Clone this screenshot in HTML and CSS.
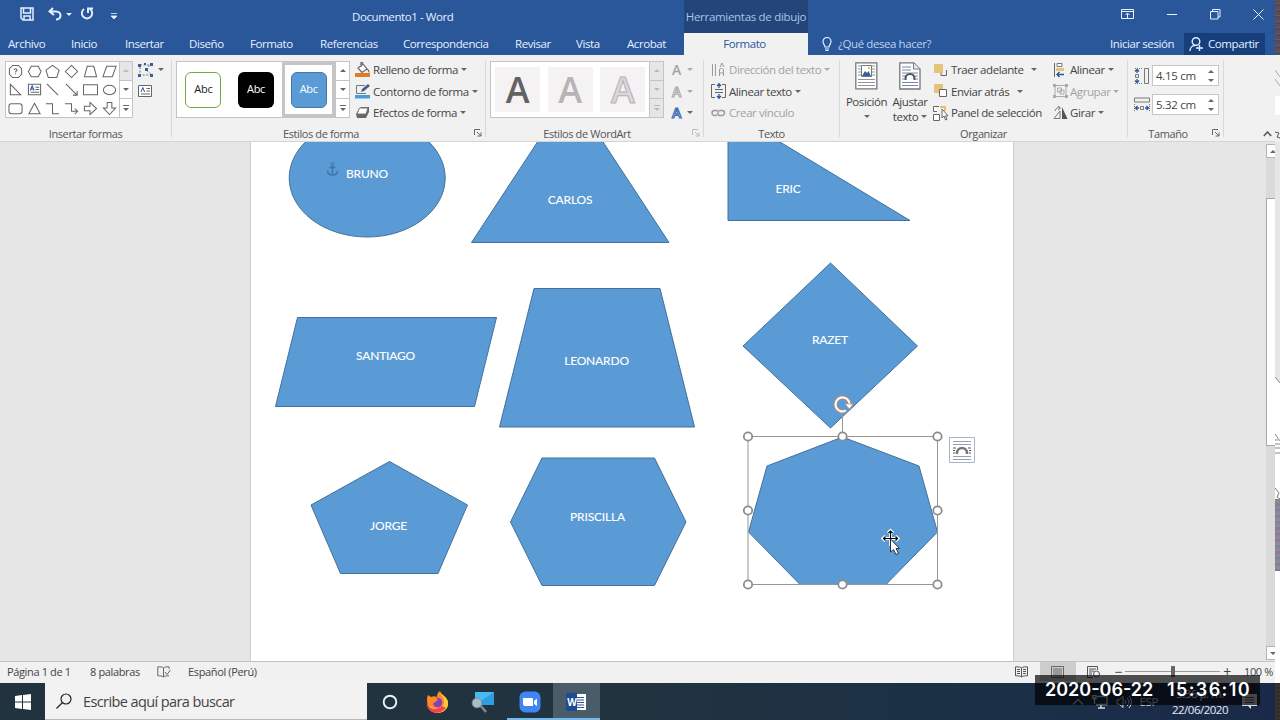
FILE: index.html
```html
<!DOCTYPE html>
<html lang="es">
<head>
    <meta charset="UTF-8">
    <meta name="viewport" content="width=device-width, initial-scale=1.0">
    <title>Documento1 - Word</title>
    <link rel="stylesheet" href="styles.css">
</head>
<body>
<div class="screen">
    <div class="window">
        <header class="titlebar">
            <div class="quick">
                <svg width="14" height="14" viewBox="0 0 14 14"><path d="M1 1h12v12H3l-2-2zM3.500 1v5h7V1M4 13V9h6v4" fill="none" stroke="#e4f1ff" stroke-width="1.500"/></svg>
                <svg width="14" height="14" viewBox="0 0 14 14"><path d="M5 1L1.500 4.500 6 8M2 4.500h6c6 0 6 8 0 8" fill="none" stroke="#e4f1ff" stroke-width="2"/></svg>
                <i class="caret light"></i>
                <svg class="redo" width="14" height="14" viewBox="0 0 14 14"><path d="M4 2a5.200 5.200 0 1 0 6 0M8 6V1.500h5" fill="none" stroke="#e4f1ff" stroke-width="1.900"/></svg>
                <svg class="more" width="7" height="7" viewBox="0 0 7 7"><path d="M0 .5h6M0 3h6L3 6z" fill="#e4f1ff" stroke="#e4f1ff" stroke-width=".8"/></svg>
            </div>
            <div class="doc-title">Documento1 - Word</div>
            <div class="tool-title">Herramientas de dibujo</div>
            <div class="win-buttons">
                <svg width="14" height="11" viewBox="0 0 14 11"><path d="M.5.5h12v9H.5zM.5 2.500h12M6.500 9V4.500M4.500 6l2-2 2 2" fill="none" stroke="#e4f1ff"/></svg>
                <svg width="11" height="11" viewBox="0 0 11 11"><path d="M0 5.500h10" stroke="#e4f1ff"/></svg>
                <svg width="11" height="11" viewBox="0 0 11 11"><path d="M.5 2.500h7.500V10H.5zM2.500 2.500v-2H10V8H8" fill="none" stroke="#e4f1ff"/></svg>
                <svg width="11" height="11" viewBox="0 0 11 11"><path d="M.5.5l10 10M10.500.5l-10 10" stroke="#e4f1ff"/></svg>
            </div>
        </header>

        <nav class="tabs">
            <span>Archivo</span><span>Inicio</span><span>Insertar</span><span>Diseño</span><span>Formato</span><span>Referencias</span><span class="wide">Correspondencia</span><span>Revisar</span><span>Vista</span><span>Acrobat</span>
            <span class="active">Formato</span>
            <span class="tell"><svg width="10" height="14" viewBox="0 0 10 14"><path d="M3 10C3 8 1 7 1 4.500a4 4 0 0 1 8 0C9 7 7 8 7 10zM3 12h4M3.500 13.500h3" fill="none" stroke="#e4f1ff" stroke-width="1.200"/></svg>¿Qué desea hacer?</span>
            <span class="login">Iniciar sesión</span>
            <span class="share"><svg width="14" height="14" viewBox="0 0 14 14"><circle cx="7" cy="4.500" r="3.800"/><path d="M1 14c0-3 2-5.500 5-5.500M7 11h7M10.500 8v6"/></svg>Compartir</span>
        </nav>

        <section class="ribbon">
            <div class="group g-insert">
                <div class="body">
                    <div class="gallery shapes">
                        <div class="shape-grid">
                            <svg viewBox="0 0 16 16"><path d="M5 1.500h6L14.500 5v6L11 14.500H5L1.500 11V5z"/><path d="M6.500 6.500c0-2 3-2 3 0 0 1-1.500 1-1.500 2.500M8 10v1"/></svg>
                            <svg viewBox="0 0 16 16"><path d="M4.500 2.500h7.500l3 5.500-3 5.500H4.500L1.500 8z"/></svg>
                            <svg viewBox="0 0 16 16"><path d="M8 1.500l7 5-2.500 8h-9L1 6.500z"/></svg>
                            <svg viewBox="0 0 16 16"><path d="M8 1.500L14.500 8 8 14.500 1.500 8z"/></svg>
                            <svg viewBox="0 0 16 16"><path d="M4.500 2.500h7l3 11h-13z"/></svg>
                            <svg viewBox="0 0 16 16"><path d="M5 2.500h10l-4 11H1z"/></svg>
                            <svg viewBox="0 0 16 16"><path d="M2.500 2.500v11h11z"/></svg>
                            <svg viewBox="0 0 16 16"><path d="M1.500 2.500h13v11h-13zM9 5.500h4M9 8h4M4 11h9"/><path d="M3.500 9l2-5 2 5M4.500 7.500h2.500" stroke="#2b579a"/></svg>
                            <svg viewBox="0 0 16 16"><path d="M2 2l12 12"/></svg>
                            <svg viewBox="0 0 16 16"><path d="M2 2l12 12M14 9.500V14H9.500"/></svg>
                            <svg viewBox="0 0 16 16"><path d="M.5 3h15v10.500H.5z"/></svg>
                            <svg viewBox="0 0 16 16"><ellipse cx="8" cy="8.500" rx="6.500" ry="5"/></svg>
                            <svg viewBox="0 0 16 16"><rect x="1" y="3" width="14" height="10.500" rx="2.500"/></svg>
                            <svg viewBox="0 0 16 16"><path d="M8 2.500l6 11H2z"/></svg>
                            <svg viewBox="0 0 16 16"><path d="M1 3h7v10.500h7"/></svg>
                            <svg viewBox="0 0 16 16"><path d="M1 3h7v8h6.500M11.500 8l3 3-3 3"/></svg>
                            <svg viewBox="0 0 16 16"><path d="M1.500 5.500h6v-4L14.500 8l-7 6.500v-4h-6z"/></svg>
                            <svg viewBox="0 0 16 16"><path d="M5.500 1.500h5v6h4L8 14.500l-6.500-7h4z"/></svg>
                        </div>
                        <div class="scroll"><b class="off"><i class="caret up"></i></b><b><i class="caret"></i></b><b class="last"><i class="caret"></i></b></div>
                    </div>
                    <div class="edit-tools">
                        <div class="row"><svg width="16" height="14" viewBox="0 0 16 14"><path d="M2 2h10L8 7l6 5H2z" fill="none" stroke="#777" stroke-dasharray="2 1.500"/><path d="M0 1h3v3H0zM12 0h3v3h-3zM7 5h3v3H7zM0 11h3v3H0zM12 11h3v3h-3zM6 0h2v2H6z" fill="#3a5f99"/></svg><i class="caret"></i></div>
                        <div class="row"><svg width="15" height="13" viewBox="0 0 15 13"><path d="M.5.5h13v11H.5zM8.500 3.500H12M8.500 6H12M3 9h9" fill="#fff" stroke="#666"/><path d="M3 7l1.800-4.500L6.600 7" fill="none" stroke="#2b579a"/></svg></div>
                    </div>
                </div>
                <div class="caption">Insertar formas</div>
            </div>

            <div class="group g-styles">
                <div class="body">
                    <div class="gallery">
                        <div class="swatch"><span class="abc outline">Abc</span></div>
                        <div class="swatch"><span class="abc black">Abc</span></div>
                        <div class="swatch selected"><span class="abc blue">Abc</span></div>
                        <div class="scroll"><b><i class="caret up"></i></b><b><i class="caret"></i></b><b class="last"><i class="caret"></i></b></div>
                    </div>
                    <div class="commands">
                        <div class="row"><svg width="16" height="16" viewBox="0 0 16 16"><path d="M3 6l5-4 4 5-5 3.500zM6 5V.500h1.500V3M12 7c2 1 2 2 2 3.500" fill="#fff" stroke="#666" stroke-width="1.200"/><path d="M0 11h15v4H0z" fill="#e07b28"/></svg>Relleno de forma<i class="caret"></i></div>
                        <div class="row"><svg width="16" height="16" viewBox="0 0 16 16"><path d="M10 2.500H1.500v8H11" fill="none" stroke="#777"/><path d="M6 9l1-3 6-5 2 2-6 5z" fill="#44618f"/><path d="M0 12h15v3.500H0z" fill="#4b9cd6"/></svg>Contorno de forma<i class="caret"></i></div>
                        <div class="row"><svg width="16" height="16" viewBox="0 0 16 16"><path d="M4 4l2-2h8v5l-3 6H2L1 9z" fill="#666"/><path d="M4.500 3h8.500L11 9H2z" fill="#fff" stroke="#777"/></svg>Efectos de forma<i class="caret"></i></div>
                    </div>
                </div>
                <div class="caption">Estilos de forma<svg class="launch" viewBox="0 0 8 8"><path d="M.5 6V.5H6M3 3l4 4M7 3.500V7H3.500"/></svg></div>
            </div>

            <div class="group g-wordart">
                <div class="body">
                    <div class="gallery">
                        <div class="swatch"><span class="art a1">A</span></div>
                        <div class="swatch"><span class="art a2">A</span></div>
                        <div class="swatch"><span class="art a3">A</span></div>
                        <div class="scroll dim"><b><i class="caret up"></i></b><b><i class="caret"></i></b><b class="last"><i class="caret"></i></b></div>
                    </div>
                    <div class="commands">
                        <div class="row off"><span class="mini">A</span><i class="caret"></i></div>
                        <div class="row off"><span class="mini hollow">A</span><i class="caret"></i></div>
                        <div class="row"><span class="mini glow">A</span><i class="caret"></i></div>
                    </div>
                </div>
                <div class="caption">Estilos de WordArt<svg class="launch faint" viewBox="0 0 8 8"><path d="M.5 6V.5H6M3 3l4 4M7 3.500V7H3.500"/></svg></div>
            </div>

            <div class="group g-text">
                <div class="body commands">
                    <div class="row off"><svg width="16" height="16" viewBox="0 0 16 16"><path d="M1.500 2v12M4.500 2v12M8.500 7v7M8.500 8c0-2 4-2 4 0v6M8.500 11h4M9 5l2-4 2 4" fill="none" stroke="#999"/></svg>Dirección del texto<i class="caret"></i></div>
                    <div class="row"><svg width="16" height="16" viewBox="0 0 16 16"><path d="M4 1.500H.5v13H4M11 1.500h3.500v13H11M4 6.500h8M4 9.500h8" fill="none" stroke="#666"/><path d="M8 0v5M8 16v-5M6 3l2-2 2 2M6 13l2 2 2-2" fill="none" stroke="#2b579a" stroke-width="1.300"/></svg>Alinear texto<i class="caret"></i></div>
                    <div class="row off"><svg width="16" height="16" viewBox="0 0 16 16"><path d="M6 10.500H3.500a2.500 2.500 0 0 1 0-5H6l2 2M8 5.500h3a2.500 2.500 0 0 1 0 5H8L6 8" fill="none" stroke="#999" stroke-width="1.500"/></svg>Crear vínculo</div>
                </div>
                <div class="caption">Texto</div>
            </div>

            <div class="group g-arrange">
                <div class="body">
                    <div class="big"><svg width="23" height="28" viewBox="0 0 23 28"><path d="M.8.8h21v26H.8z" fill="#fff" stroke="#777" stroke-width="1.300"/><path d="M3 4h3M3 7h3M3 10h3M3 13h3M17 4h3M17 7h3M17 10h3M17 13h3M3 17.500h17M3 20.500h17M3 23.500h17" stroke="#8795a5"/><path d="M6.500 3.500h10v11h-10z" fill="#fff" stroke="#777"/><path d="M7 14l3-5 2 2 1.500-2 2.500 5z" fill="#365f9a"/><circle cx="14" cy="6" r="1.200" fill="#e8bd55"/></svg><span>Posición</span><i class="caret"></i></div>
                    <div class="big wrap-text"><svg width="22" height="28" viewBox="0 0 22 28"><path d="M.8.800h14L21 7v20H.8z" fill="#fff" stroke="#777" stroke-width="1.300"/><path d="M14.500 1v6H21" fill="#e6edf5" stroke="#777"/><path d="M3 5h9M3 8h9M3 11h16M3 14h3M16 14h3M3 17h2M17 17h2M3 20.500h16M3 23.500h16" stroke="#7389a8"/><path d="M6.500 18v-1.500a4.500 4.500 0 0 1 9 0V18" fill="none" stroke="#555" stroke-width="2.200"/></svg><span>Ajustar</span><span class="drop">texto<i class="caret"></i></span></div>
                    <div class="commands order">
                        <div class="row"><svg width="16" height="16" viewBox="0 0 16 16"><path d="M13.500 8v5.500H8V11" fill="none" stroke="#666"/><path d="M1 2h9v9H1z" fill="#e6c477"/></svg>Traer adelante<i class="caret far"></i></div>
                        <div class="row"><svg width="16" height="16" viewBox="0 0 16 16"><path d="M1 1h9v9H1z" fill="#e6c477"/><path d="M6.500 6.500h7v7h-7z" fill="#fff" stroke="#666"/></svg>Enviar atrás<i class="caret far"></i></div>
                        <div class="row"><svg width="16" height="16" viewBox="0 0 16 16"><path d="M6 1.500H.5v5H4M.5 9.500h6v6h-6z" fill="#fff" stroke="#666"/><path d="M7 2h5v4" fill="none" stroke="#e6bd65" stroke-width="2"/><path d="M9 4v9l2-2 1.500 4 1.500-.7-1.500-3.500H15z" fill="#fff" stroke="#666"/></svg>Panel de selección</div>
                    </div>
                    <div class="commands align">
                        <div class="row"><svg width="15" height="16" viewBox="0 0 15 16"><path d="M1.500 1v14" stroke="#666"/><path d="M4 1.500h5v3H4z" fill="#fff" stroke="#777"/><path d="M3 6h8v3H3z" fill="#e6c477"/><path d="M11 12.500H4M6.500 10L4 12.500 6.500 15" fill="none" stroke="#2b579a" stroke-width="1.400"/></svg>Alinear<i class="caret"></i></div>
                        <div class="row off"><svg width="15" height="16" viewBox="0 0 15 16"><path d="M2 2.500h11v11H2zM4.500 5h4v4h-4zM7 7h4v4H7z" fill="none" stroke="#aaa"/><path d="M0 1h3v3H0zM12 1h3v3h-3zM0 12h3v3H0zM12 12h3v3h-3z" fill="#aaa"/></svg>Agrupar<i class="caret"></i></div>
                        <div class="row"><svg width="15" height="16" viewBox="0 0 15 16"><path d="M1 13.500h6V6zM2 6c1-3 3-4 5-3M5 1l2.500 2L5 5" fill="none" stroke="#777"/><path d="M9 2l5.500 12H9z" fill="#555"/></svg>Girar<i class="caret"></i></div>
                    </div>
                </div>
                <div class="caption">Organizar</div>
            </div>

            <div class="group g-size">
                <div class="body sizes">
                    <label><svg width="16" height="16" viewBox="0 0 16 16"><path d="M10.500.5h4v15h-4z" fill="none" stroke="#777"/><path d="M1 .5h8M1 15.500h8" stroke="#777" stroke-dasharray="1 1"/><path d="M1.500 6.500h3v3h-3z" fill="none" stroke="#777"/><path d="M3 5V2M1 3.500l2-2 2 2M3 11v3M1 12.500l2 2 2-2" fill="none" stroke="#2b579a" stroke-width="1.300"/></svg><span class="field">4.15 cm<em><i class="caret up"></i><i class="caret"></i></em></span></label>
                    <label><svg width="16" height="16" viewBox="0 0 16 16"><path d="M.5 1h15v4H.5zM6.500 9.500h3v3h-3z" fill="none" stroke="#777"/><path d="M.5 7v8M15.500 7v8" stroke="#777" stroke-dasharray="1 1"/><path d="M5 11H2M3.500 9l-2 2 2 2M11 11h3M12.500 9l2 2-2 2" fill="none" stroke="#2b579a" stroke-width="1.300"/></svg><span class="field">5.32 cm<em><i class="caret up"></i><i class="caret"></i></em></span></label>
                </div>
                <div class="caption">Tamaño<svg class="launch" viewBox="0 0 8 8"><path d="M.5 6V.5H6M3 3l4 4M7 3.500V7H3.500"/></svg></div>
            </div>
            <svg class="collapse" width="9" height="6" viewBox="0 0 9 6"><path d="M.8 5l3.700-4 3.700 4" fill="none" stroke="#555" stroke-width="1.500"/></svg>
        </section>

        <main class="workspace">
            <div class="page">
                <svg class="drawing" width="762" height="519" viewBox="251 142 762 519">
                    <g class="figure">
                        <ellipse cx="367.200" cy="178" rx="78" ry="59"/>
                        <path d="M570.300 92L669 242.500H471.500z"/>
                        <path d="M728 110.600V220.500H910z"/>
                        <path d="M297.500 317.500H496.500L474.500 406.500H275.500z"/>
                        <path d="M534 288.500H660L694.500 427H499.500z"/>
                        <path d="M830.500 263L917.500 346 830.500 428 743 346z"/>
                        <path d="M389.500 461.500L467.500 505 438 573.500H340.500L311 505z"/>
                        <path d="M542 458H654.500L686 522 654.500 585.500H542L510.500 522z"/>
                        <path d="M842.500 437L919 466 937.500 532 886 584.500H800L748.500 532 767 466z"/>
                    </g>
                    <path d="M332.500 165v9M329.500 167.500h6M327.500 170.500c0 3 2 4.500 5 4.500s5-1.500 5-4.500" fill="none" stroke="#3d74ae" stroke-width="1.500"/><circle cx="332.500" cy="164" r="1.500" fill="none" stroke="#3d74ae"/>
                    <g class="names">
                        <text x="367" y="177.500">BRUNO</text>
                        <text x="570" y="203.500">CARLOS</text>
                        <text x="788" y="193">ERIC</text>
                        <text x="385.500" y="360">SANTIAGO</text>
                        <text x="596.500" y="364.500">LEONARDO</text>
                        <text x="830" y="344">RAZET</text>
                        <text x="388.500" y="529.500">JORGE</text>
                        <text x="597.500" y="520.500">PRISCILLA</text>
                    </g>
                    <g class="handles">
                        <path d="M748 436.500H937.500V584.500H748zM842.500 436V413"/>
                        <circle cx="748" cy="436.500" r="4.200"/><circle cx="842.500" cy="436.500" r="4.200"/><circle cx="937.500" cy="436.500" r="4.200"/>
                        <circle cx="748" cy="510.500" r="4.200"/><circle cx="937.500" cy="510.500" r="4.200"/>
                        <circle cx="748" cy="584.500" r="4.200"/><circle cx="842.500" cy="584.500" r="4.200"/><circle cx="937.500" cy="584.500" r="4.200"/>
                    </g>
                    <path d="M846 410.500a7 7 0 1 1 3.500-6" fill="none" stroke="#b98e7c" stroke-width="4"/>
                    <path d="M846 410.500a7 7 0 1 1 3.500-6" fill="none" stroke="#fff" stroke-width="2"/>
                    <path d="M845 404h8l-3.500 5z" fill="#fff" stroke="#c9957e" stroke-width=".8"/>
                    <g fill="none">
                        <path d="M949.500 437.500h25v25h-25z" fill="#fff" stroke="#a9b4c4"/>
                        <path d="M953 441.500h18M953 444.500h18M953 456.500h18M953 459.500h18" stroke="#8fa3bd"/>
                        <path d="M953 448h3M968 448h3M953 450.500h2M969 450.500h2M953 453h2M969 453h2" stroke="#555"/>
                        <path d="M957 454v-1a5 5 0 0 1 10 0v1" stroke="#777" stroke-width="2.500"/>
                    </g>
                    <g class="pointer">
                        <path d="M890.500 531v15M883 538.500h15M888 533l2.500-2.500 2.500 2.500M885.500 536l-2.500 2.500 2.500 2.500M895.500 536l2.500 2.500-2.500 2.500" fill="none" stroke="#fff" stroke-width="3"/>
                        <path d="M890.500 531v15M883 538.500h15M888.500 533l2-2 2 2M885.500 536.500l-2 2 2 2M895.500 536.500l2 2-2 2" fill="none" stroke="#000" stroke-width="1.200"/>
                        <path d="M890.500 539v13l3-2.500 2.500 5 2.500-1.200-2.500-4.800h3.500z" fill="#fff" stroke="#222" stroke-width=".9"/>
                    </g>
                </svg>
            </div>
            <div class="scrollbar"><b><i class="caret up"></i></b><div class="thumb"></div><b><i class="caret"></i></b></div>
        </main>

        <footer class="status">
            <span class="pages">Página 1 de 1</span>
            <span class="words">8 palabras</span>
            <svg class="proof" width="14" height="12" viewBox="0 0 14 12"><path d="M6.500 2C5 .8 3 .8.800.8v9c2.200 0 4.200 0 5.700 1.200V2C8 .8 9 .8 12 .8V3M6.500 11c1.500-1.200 3-1.200 5.500-1.200M8 6l2 2.500L13.500 4" fill="none" stroke="#666"/></svg>
            <span>Español (Perú)</span>
            <div class="views">
                <b><svg width="13" height="12" viewBox="0 0 13 12"><path d="M6.500 2C5 .8 3 .8.500.8v9c2.500 0 4.500 0 6 1.200 1.500-1.200 3.500-1.200 6-1.200v-9c-2.500 0-4.500 0-6 1.200v9M2 3.500h3M2 5.500h3M2 7.500h3M8 3.500h3M8 5.500h3M8 7.500h3" fill="none" stroke="#555"/></svg></b>
                <b class="on"><svg width="13" height="12" viewBox="0 0 13 12"><path d="M.5.5h12v11H.5zM2 3h9M2 5h9M2 7h9M2 9h9" fill="none" stroke="#666"/></svg></b>
                <b><svg width="14" height="12" viewBox="0 0 14 12"><path d="M6 11.500H.5V.5h10V4M2 3h7M2 5h5M2 7h3M2 9h3" fill="none" stroke="#555"/><circle cx="9.500" cy="8" r="3" fill="none" stroke="#555"/></svg></b>
            </div>
            <div class="zoom"><span>−</span><div class="track"><i></i></div><span>+</span></div>
            <span class="percent">100 %</span>
        </footer>

        <div class="taskbar">
            <div class="start"><svg width="16" height="16" viewBox="0 0 16 16"><path d="M0 2l7-1v6.500H0zM8 .900L16 0v7.500H8zM0 8.500h7V15l-7-1zM8 8.500h8V16l-8-1z" fill="#fff"/></svg></div>
            <div class="search"><svg width="16" height="16" viewBox="0 0 16 16"><circle cx="10" cy="6" r="5" fill="none" stroke="#222" stroke-width="1.200"/><path d="M6.500 9.500L.5 15.500" stroke="#222" stroke-width="1.300"/></svg>Escribe aquí para buscar</div>
            <div class="app"><svg width="16" height="16" viewBox="0 0 16 16"><circle cx="8" cy="8" r="6.300" fill="none" stroke="#e8f2f5" stroke-width="1.900"/></svg></div>
            <div class="app"><svg width="22" height="22" viewBox="0 0 22 22"><path d="M1 7l1-3 3 2c2-1 4-1 6 0 0-3 1-5 3-6l1 3c4 2 7 5 7 9a10.500 10 0 0 1-21 0z" fill="#ff8a24"/><path d="M14 1c0 3 5 5 4 11s-8 7-12 4l-5-3c1 5 5 9 11 9s11-5 10-11c-1-5-5-6-8-10z" fill="#ffc83a"/><path d="M1 7c0 11 8 14 15 8l4 2c-5 7-19 7-19-5z" fill="#fa4053"/><circle cx="11.500" cy="11.500" r="4.800" fill="#8341b9"/><path d="M4 7h6l2 2-3 2-2 2z" fill="#ff8a24"/></svg></div>
            <div class="app"><svg width="24" height="22" viewBox="0 0 24 22"><path d="M4 1h19v13H4z" fill="#4abaf4"/><path d="M4 14L23 1v13z" fill="#2e9ee2"/><path d="M9 14l6 7" stroke="#7f8990" stroke-width="2.500"/><circle cx="6" cy="12" r="4.800" fill="#a8bdca" stroke="#78919f"/></svg></div>
            <div class="app open"><svg width="22" height="22" viewBox="0 0 22 22"><rect x=".5" y=".5" width="21" height="21" rx="6" fill="#3f85f4"/><path d="M4 7h9q1 0 1 1v7H6q-2 0-2-2zM15 10l3-2.500v7.500l-3-2z" fill="#fff"/></svg></div>
            <div class="app open current"><div class="word"><span>W</span><svg width="9" height="16" viewBox="0 0 9 16"><path d="M0 0h9v16H0z" fill="#fff"/><path d="M0 3.500h7M0 6h7M0 8.500h7M0 11h7M0 13.500h7" stroke="#2b579a"/></svg></div></div>
            <div class="tray">
                <svg width="12" height="7" viewBox="0 0 12 7"><path d="M1 6.500l5-5 5 5" fill="none" stroke="#b4b9c4" stroke-width="1.300"/></svg>
                <svg width="16" height="14" viewBox="0 0 16 14"><path d="M5 1.500h10v8H4M9 10v3M6 13h7M1 .5h3v3H1zM2.500 4v5" fill="none" stroke="#d4d8e0" stroke-width="1.300"/></svg>
                <svg width="16" height="14" viewBox="0 0 16 14"><path d="M1 5h2l4-3.500v11L3 9H1zM9 5q2 2 0 4M11 3q4 4 0 8M13 1q5 6 0 12" fill="none" stroke="#d4d8e0"/></svg>
                <span class="lang">ESP</span>
                <div class="clock"><span>3:36 p. m.</span><span>22/06/2020</span></div>
                <svg width="16" height="16" viewBox="0 0 16 16"><path d="M0 0h15v12H9v3l-3-3H0z" fill="#d5d7df"/><path d="M3 3.500h9M3 6h9M3 8.500h9" stroke="#454a5b"/></svg>
            </div>
        </div>
    </div>
    <aside class="edge">
        <div class="noise top"></div>
        <div class="sliver"><svg width="5" height="87" viewBox="0 0 5 87"><path d="M0 15l5 7M0 24l5 7" stroke="#aaa"/><path d="M0 41h5v19H0z" fill="#fff"/><path d="M0 77l4 1-2 4 3 1" fill="none" stroke="#555"/></svg></div>
        <div class="gray"></div>
        <div class="blank"><svg width="5" height="122" viewBox="0 0 5 122"><path d="M0 0h5v6z" fill="#e6e6e6"/><path d="M0 0l5 6M0 57l5 7M0 63h3M0 67h5M0 71h5M0 76h5" stroke="#888"/><path d="M0 111l4 5-2 4 3 2" fill="none" stroke="#777"/></svg></div>
        <div class="noise"></div>
        <div class="white"></div>
        <div class="noise dark"></div>
    </aside>
    <div class="stamp"><span>2020-06-22</span><span class="time">15:36:10</span></div>
</div>
</body>
</html>
```
FILE: styles.css
```css
* {
    box-sizing: border-box;
}
body {
    margin: 0;
    font-family: 'Open Sans', 'Noto Sans', sans-serif;
    font-size: 11.5px;
    letter-spacing: -0.42px;
    color: #444;
}
svg {
    display: block;
    flex: none;
}
.screen {
    position: relative;
    display: flex;
    width: 1280px;
    height: 720px;
    overflow: hidden;
}
.window {
    width: 1275px;
    display: flex;
    flex-direction: column;
}

/* title bar */
.titlebar {
    height: 33px;
    display: grid;
    grid-template-columns: 352px 332px 124px 1fr;
    grid-template-rows: 33px;
    background: #2a569a;
    color: #e4f1ff;
    line-height: 33px;
    white-space: nowrap;
}
.quick {
    display: flex;
    align-items: center;
    padding: 0 0 5px 20px;
}
.quick svg + svg {
    margin-left: 14px;
}
.quick .caret {
    margin: 0 8px 0 4px;
}
.quick .more {
    margin: 4px 0 0 17px;
}
.tool-title {
    background: #23457a;
    color: #a9c4e6;
    text-align: center;
    letter-spacing: -0.3px;
}
.win-buttons {
    display: flex;
    align-items: center;
    justify-content: flex-end;
    padding: 0 11px 5px 0;
    gap: 32px;
}

.tabs {
    height: 22px;
    display: grid;
    grid-template-columns: 63px 54px 64px 61px 70px 83px 112px 61px 51px 57px 124px 302px 74px 81px;
    padding-left: 8px;
    background: #2a569a;
    color: #e4f1ff;
    line-height: 22px;
    white-space: nowrap;
}
.tabs .active {
    background: #f1f1f1;
    color: #2b579a;
    text-align: center;
    padding-right: 3px;
}
.tabs .tell {
    display: flex;
    align-items: center;
    gap: 6px;
    padding-left: 14px;
    color: #bcd3ef;
}
.tabs .share {
    display: flex;
    align-items: center;
    gap: 5px;
    padding-left: 5px;
    background: #173f7c;
}
.share svg {
    fill: none;
    stroke: #e4f1ff;
    stroke-width: 1.4;
}

.caret {
    display: inline-block;
    flex: none;
    width: 0;
    height: 0;
    border: 3px solid transparent;
    border-top: 3px solid #666;
    border-bottom: 0;
}
.caret.up {
    border-top: 0;
    border-bottom: 3px solid #666;
}
.caret.light {
    border-top-color: #e4f1ff;
}

/* ribbon */
.ribbon {
    height: 87px;
    display: flex;
    background: #f1f1f1;
    border-bottom: 1px solid #d5d5d5;
    white-space: nowrap;
}
.group {
    position: relative;
    display: flex;
    flex-direction: column;
    padding-left: 4px;
}
.group::after {
    content: "";
    position: absolute;
    right: 0;
    top: 5px;
    width: 1px;
    height: 77px;
    background: #d8d8d8;
}
.g-insert { width: 172px; }
.g-styles { width: 314px; }
.g-wordart { width: 218px; }
.g-text { width: 136px; }
.g-arrange { width: 288px; }
.g-size { width: 96px; }
.body {
    display: flex;
    flex: none;
    height: 69px;
    padding-top: 4px;
}
.caption {
    display: flex;
    justify-content: center;
    line-height: 20px;
    font-size: 11px;
    letter-spacing: -0.4px;
    color: #555;
    padding-right: 5px;
}
.g-styles .caption, .g-wordart .caption, .g-size .caption {
    padding-right: 20px;
}
.launch {
    position: absolute;
    right: 4px;
    bottom: 4px;
    width: 8px;
    height: 8px;
    fill: none;
    stroke: #666;
}
.launch.faint {
    stroke: #bbb;
}
.gallery {
    display: flex;
    width: 174px;
    height: 57px;
    margin-top: 2px;
    background: #fff;
    border: 1px solid #c4c4c4;
}
.gallery.shapes {
    width: 128px;
    margin-left: 1px;
}
.shape-grid {
    display: grid;
    grid-template-columns: repeat(6, 18.8px);
    grid-template-rows: repeat(3, 18.6px);
    place-items: center;
    width: 113px;
}
.shape-grid svg {
    width: 15px;
    height: 15px;
    fill: none;
    stroke: #666;
    stroke-width: 1.1;
}
.scroll {
    display: flex;
    flex-direction: column;
    width: 14px;
    margin-left: auto;
    border-left: 1px solid #c4c4c4;
}
.scroll b {
    flex: 1;
    display: flex;
    flex-direction: column;
    align-items: center;
    justify-content: center;
    gap: 2px;
}
.scroll b + b {
    border-top: 1px solid #c4c4c4;
}
.scroll .off, .scroll.dim {
    background: #e6e6e6;
}
.scroll .off .caret, .scroll.dim .caret {
    opacity: .35;
}
.scroll .last::before {
    content: "";
    width: 6px;
    height: 1px;
    background: #666;
}
.dim .last::before {
    opacity: .35;
}
.swatch {
    width: 53px;
    display: flex;
    align-items: center;
    justify-content: center;
}
.swatch.selected {
    border: 3px solid #c5c5c5;
}
.abc {
    width: 36px;
    height: 36px;
    border-radius: 6px;
    line-height: 31px;
    text-align: center;
    font-size: 11px;
    letter-spacing: -0.3px;
    flex: none;
}
.outline {
    border: 1px solid #70ad47;
    color: #222;
}
.black {
    background: #000;
    color: #fff;
    line-height: 33px;
}
.blue {
    background: #5b9bd5;
    border: 1px solid #4578a8;
    color: #fff;
}
.art {
    width: 45px;
    height: 45px;
    background: #f5f2f4;
    line-height: 45px;
    text-align: center;
    font-size: 36px;
    font-weight: 600;
}
.a1 { color: #626262; }
.a2 { color: #b7b4b6; }
.a3 {
    color: #dcd6da;
    -webkit-text-stroke: 1px #b7b1b5;
}
.commands {
    display: flex;
    flex-direction: column;
}
.g-styles .commands {
    margin-left: 5px;
}
.g-wordart .commands {
    margin-left: 8px;
}
.row {
    display: flex;
    align-items: center;
    height: 21.5px;
    gap: 2px;
}
.row .caret {
    margin-left: 1px;
}
.row.off {
    color: #a3a3a3;
}
.off .caret {
    opacity: .5;
}
.edit-tools {
    margin-left: 5px;
}
.edit-tools .caret {
    margin-left: 2px;
}
.mini {
    width: 12px;
    font-size: 14px;
    font-weight: 600;
}
.hollow {
    color: #f1f1f1;
    -webkit-text-stroke: 1px #aaa;
}
.glow {
    color: #fff;
    -webkit-text-stroke: 1.2px #3f6fb4;
}
.g-text .body {
    padding-left: 3px;
}
.big {
    width: 45px;
    display: flex;
    flex-direction: column;
    align-items: center;
    padding-top: 3px;
    line-height: 15px;
}
.big svg {
    margin-bottom: 4px;
}
.big > .caret {
    margin-top: 6px;
}
.wrap-text {
    width: 42px;
}
.drop {
    display: flex;
    align-items: center;
    gap: 3px;
}
.order {
    width: 120px;
    margin-left: 2px;
}
.order .far {
    margin-left: 6px;
}
.sizes {
    flex-direction: column;
    gap: 8px;
    padding: 10px 0 0 2px;
}
.sizes label {
    display: flex;
    align-items: center;
    gap: 2px;
}
.field {
    display: flex;
    justify-content: space-between;
    width: 67px;
    height: 21px;
    padding: 0 4px 0 3px;
    border: 1px solid #c6c6c6;
    background: #fff;
    letter-spacing: -0.3px;
    line-height: 19px;
}
.field em {
    display: flex;
    flex-direction: column;
    justify-content: center;
    gap: 6px;
}
.collapse {
    align-self: flex-end;
    margin: 0 0 4px 39px;
}

/* document */
.workspace {
    height: 519px;
    display: flex;
    background: #e6e6e6;
}
.page {
    width: 764px;
    margin-left: 250px;
    background: #fff;
    border: solid #cfcfcf;
    border-width: 0 1px;
}
.figure {
    fill: #5b9bd5;
    stroke: #41719c;
}
.names {
    fill: #fff;
    font-family: Lato, sans-serif;
    font-size: 12px;
    font-weight: 500;
    letter-spacing: -0.2px;
    text-anchor: middle;
}
.handles {
    fill: none;
    stroke: #969696;
}
.handles circle {
    fill: #fff;
    stroke: #8c8c8c;
    stroke-width: 1.8;
}
.scrollbar {
    width: 9px;
    margin: 2px 0 1px auto;
    display: flex;
    flex-direction: column;
    background: #dadada;
    overflow: hidden;
}
.scrollbar b {
    width: 13px;
    height: 14px;
    flex: none;
    display: flex;
    align-items: center;
    padding-left: 3px;
    background: #fff;
    border: 1px solid #b4b4b4;
}
.thumb {
    height: 248px;
    margin: 40px 0 auto;
    background: #fff;
    border: 1px solid #a8a8a8;
    border-right: 0;
}

/* status bar */
.status {
    height: 22px;
    display: flex;
    align-items: center;
    padding: 0 0 2px 7px;
    background: #f1f1f1;
    border-top: 1px solid #c2c2c2;
    font-size: 11px;
    letter-spacing: -0.36px;
    white-space: nowrap;
}
.pages { width: 83px; }
.words { width: 67px; }
.proof { margin-right: 17px; }
.views {
    display: flex;
    margin-left: auto;
    align-self: stretch;
}
.views b {
    width: 36px;
    display: flex;
    align-items: center;
    justify-content: center;
}
.views .on {
    background: #cdcdcd;
}
.zoom {
    display: flex;
    align-items: center;
    gap: 3px;
    margin-left: 3px;
    font-size: 14px;
}
.track {
    display: flex;
    justify-content: center;
    align-items: center;
    width: 95px;
    height: 12px;
    background: linear-gradient(#999, #999) center / 100% 1px no-repeat;
}
.track i {
    width: 4px;
    height: 11px;
    background: #666;
}
.percent {
    margin: 0 2px 0 13px;
}

/* taskbar */
.taskbar {
    height: 37px;
    display: flex;
    background: linear-gradient(90deg, #20333f 50%, #1b2f47 80%, #1a2949);
}
.start {
    width: 45px;
    display: flex;
    align-items: center;
    justify-content: center;
}
.search {
    width: 322px;
    display: flex;
    align-items: center;
    gap: 11px;
    padding-left: 11px;
    background: #f2f2f2;
    border-bottom: 1px solid #b9b9b9;
    font-size: 14.5px;
    letter-spacing: -0.6px;
}
.app {
    width: 46.5px;
    display: flex;
    align-items: center;
    justify-content: center;
}
.open {
    border-bottom: 2px solid #76b9ed;
    padding-top: 2px;
}
.current {
    background: #4a5c67;
}
.word {
    display: flex;
    align-items: center;
}
.word span {
    width: 11px;
    height: 18px;
    background: #1e4a94;
    color: #fff;
    font-size: 10px;
    font-weight: 700;
    line-height: 18px;
    text-align: center;
}
.tray {
    display: flex;
    align-items: center;
    gap: 8px;
    margin-left: auto;
    padding-right: 17px;
    color: #e8ebf2;
}
.lang {
    color: #c8ccd6;
}
.clock {
    display: flex;
    flex-direction: column;
    align-items: center;
    margin: 0 6px;
    line-height: 16px;
    letter-spacing: -0.5px;
}

/* strip of the desktop past the window */
.edge {
    width: 5px;
    display: flex;
    flex-direction: column;
    background: #fff;
}
.noise {
    height: 72px;
    background: repeating-linear-gradient(#7d8d80 0 1px, #a27c98 1px 3px, #769a86 3px 4px, #807ca9 4px 6px);
}
.noise.top {
    height: 55px;
    background: repeating-linear-gradient(#4a5848 0 1px, #793e4f 1px 3px, #4e6a50 3px 4px, #4b4770 4px 6px);
}
.noise.dark {
    height: 37px;
    background: repeating-linear-gradient(#2c2f2c 0 2px, #41312b 2px 4px);
}
.sliver {
    height: 87px;
    background: #f1f1f1;
}
.gray { height: 235px; background: #e6e6e6; }
.blank { height: 122px; }
.white { flex: 1; }

/* recording time laid over the screen */
.stamp {
    position: absolute;
    left: 1035px;
    top: 675px;
    width: 225px;
    height: 30px;
    display: flex;
    justify-content: space-between;
    padding: 0 9px 0 10px;
    background: rgba(0, 0, 0, .68);
    color: #fff;
    font-family: Inter, sans-serif;
    font-size: 18px;
    font-weight: 600;
    letter-spacing: 0;
    line-height: 30px;
}
.stamp .time {
    letter-spacing: 1.4px;
}
```
